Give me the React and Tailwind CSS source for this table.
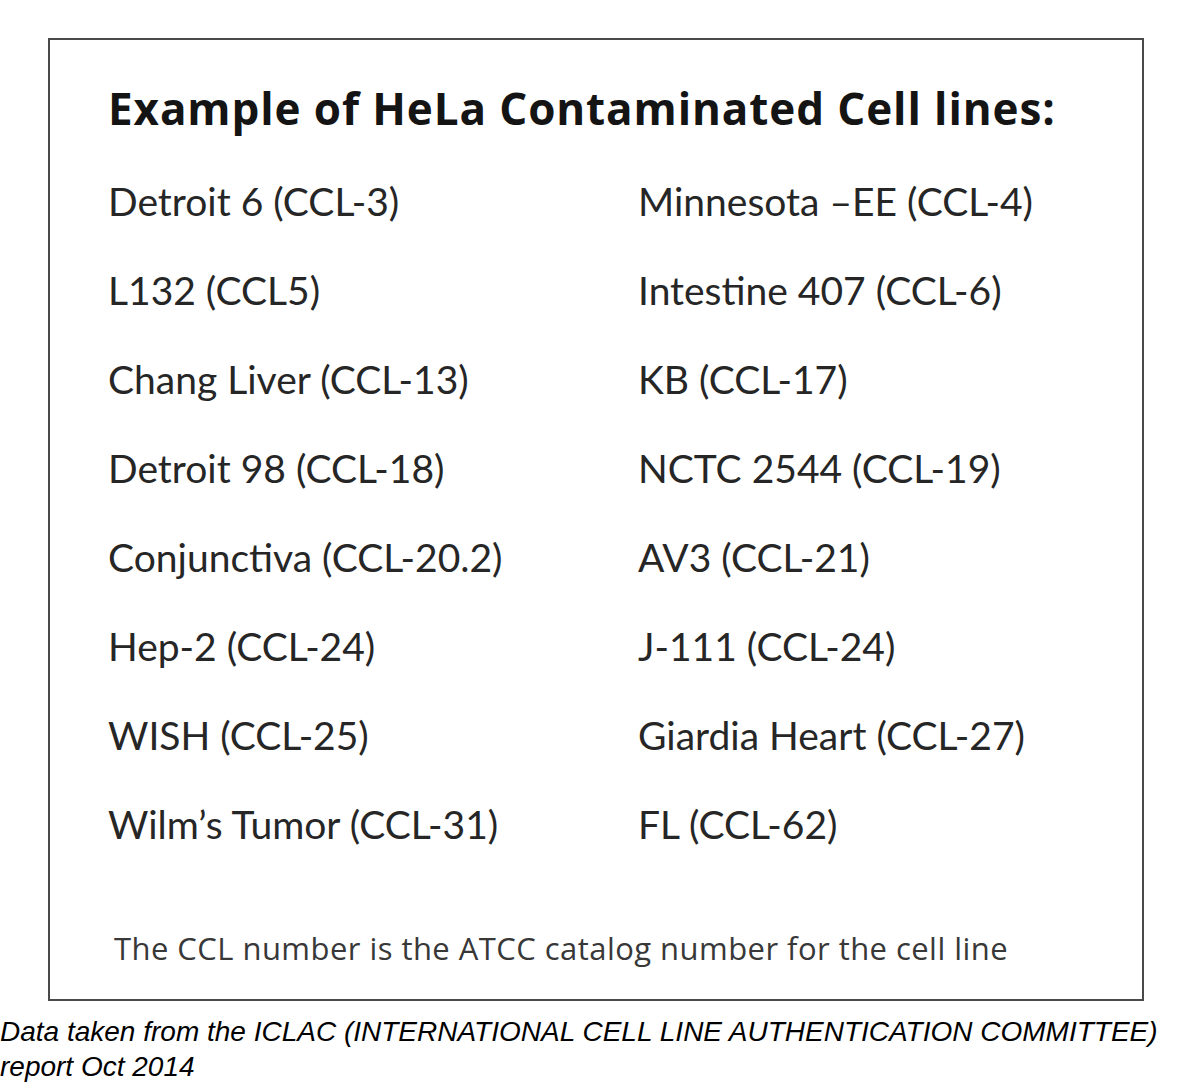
import React from "react";

const rows = [
  ["Detroit 6 (CCL-3)", "Minnesota \u2013EE (CCL-4)"],
  ["L132 (CCL5)", "Intestine 407 (CCL-6)"],
  ["Chang Liver (CCL-13)", "KB (CCL-17)"],
  ["Detroit 98 (CCL-18)", "NCTC 2544 (CCL-19)"],
  ["Conjunctiva (CCL-20.2)", "AV3 (CCL-21)"],
  ["Hep-2 (CCL-24)", "J-111 (CCL-24)"],
  ["WISH (CCL-25)", "Giardia Heart (CCL-27)"],
  ["Wilm\u2019s Tumor (CCL-31)", "FL (CCL-62)"],
];

export default function App() {
  return (
    <div className="w-[1200px] h-[1092px] bg-white overflow-hidden">
      <div className="pt-[38px] pl-[48px]">
        <div className="w-[1096px] h-[963px] border-2 border-[#4a4a4a] pt-[38px] pl-[58px] flex flex-col font-['Lato',sans-serif]">
          <div className="text-[44px] leading-[60px] font-bold text-[#141414] font-['Open_Sans',sans-serif] tracking-[0.9px] whitespace-nowrap">
            Example of HeLa Contaminated Cell lines:
          </div>
          <div className="mt-[19px] grid grid-cols-[530px_1fr]">
            {rows.map(([a, b], i) => (
              <React.Fragment key={i}>
                <div className="text-[39px] leading-[89px] text-[#262626]">{a}</div>
                <div className="text-[39px] leading-[89px] text-[#262626]">{b}</div>
              </React.Fragment>
            ))}
          </div>
          <div className="mt-[59px] pl-[6px] text-[31px] leading-[40px] text-[#383838] font-['Open_Sans',sans-serif] tracking-[0.45px] whitespace-nowrap">
            The CCL number is the ATCC catalog number for the cell line
          </div>
        </div>
      </div>
      <div className="mt-[13px] text-[28px] leading-[35px] italic text-black font-['Liberation_Sans',Arial,sans-serif]">
        Data taken from the ICLAC (INTERNATIONAL CELL LINE AUTHENTICATION COMMITTEE)
        <br />
        report Oct 2014
      </div>
    </div>
  );
}
